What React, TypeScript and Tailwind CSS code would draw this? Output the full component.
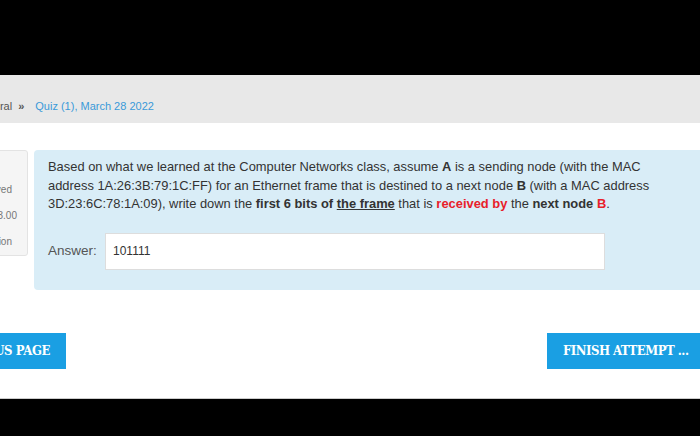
import React from 'react';

const sans = { fontFamily: '"Liberation Sans", Arial, sans-serif' };
const slab = { fontFamily: '"DejaVu Serif Condensed", "Liberation Serif", serif' };

const App: React.FC = () => {
  return (
    <div className="w-[700px] h-[436px] bg-white overflow-hidden flex flex-col" style={sans}>
      <div className="h-[75px] bg-black shrink-0" />

      <div className="h-[48px] bg-[#e8e8e8] flex items-center shrink-0">
        <div className="w-[200px] overflow-hidden flex justify-start">
          <div className="flex items-center whitespace-nowrap text-[11px] -ml-[27px] pt-[15px]">
            <span className="text-[#555]">General</span>
            <span className="text-[#555] ml-[6px] mr-[11px] font-bold">»</span>
            <span className="text-[#3a9ad9]">Quiz (1), March 28 2022</span>
          </div>
        </div>
      </div>

      <div className="flex-1 flex flex-col">
        <div className="flex items-start gap-[6px] pt-[27px]">
          <div className="w-[28px] h-[106px] overflow-hidden shrink-0 flex justify-end">
            <div className="w-[130px] shrink-0 h-full bg-[#f5f5f5] border border-[#e3e3e3] rounded-[3px] text-[10px] text-[#777] text-right flex flex-col pt-[31px] gap-[11px]">
              <span className="pr-[15px]">Answer saved</span>
              <span className="pr-[10px]">Marked out of 3.00</span>
              <span className="pr-[15px]">Flag question</span>
            </div>
          </div>

          <div className="flex-1 h-[140px] bg-[#d9edf7] rounded-l-[4px] pl-[14px] pt-[8px]">
            <p className="w-[614px] text-[12.9px] leading-[18.5px] text-[#333]">
              Based on what we learned at the Computer Networks class, assume <b>A</b> is a sending node (with the MAC
              address 1A:26:3B:79:1C:FF) for an Ethernet frame that is destined to a next node <b>B</b> (with a MAC address
              3D:23:6C:78:1A:09), write down the <b>first 6 bits of <u>the frame</u></b> that is{' '}
              <b className="text-[#e8202a]">received by</b> the <b>next node</b> <b className="text-[#e8202a]">B</b>.
            </p>
            <div className="flex items-center mt-[19px]">
              <span className="text-[13.5px] text-[#555] w-[57px]">Answer:</span>
              <div className="w-[500px] h-[37px] bg-white border border-[#ddd] flex items-center pl-[7px] text-[12px] text-[#333]">
                101111
              </div>
            </div>
          </div>
        </div>

        <div className="flex justify-between items-center mt-[43px]">
          <div className="w-[66px] overflow-hidden flex justify-end">
            <button
              className="shrink-0 whitespace-nowrap h-[36px] bg-[#1a9fe3] text-white text-[13px] font-bold pl-[16px] pr-[16px] tracking-[-0.4px]"
              style={slab}
            >
              PREVIOUS PAGE
            </button>
          </div>
          <div className="w-[153px] overflow-hidden flex justify-start">
            <button
              className="shrink-0 whitespace-nowrap h-[36px] bg-[#1a9fe3] text-white text-[13px] font-bold pl-[16px] pr-[16px] tracking-[-0.5px]"
              style={slab}
            >
              FINISH ATTEMPT ...
            </button>
          </div>
        </div>
      </div>

      <div className="h-[38px] bg-black border-t border-[#ccc] shrink-0" />
    </div>
  );
};

export default App;
